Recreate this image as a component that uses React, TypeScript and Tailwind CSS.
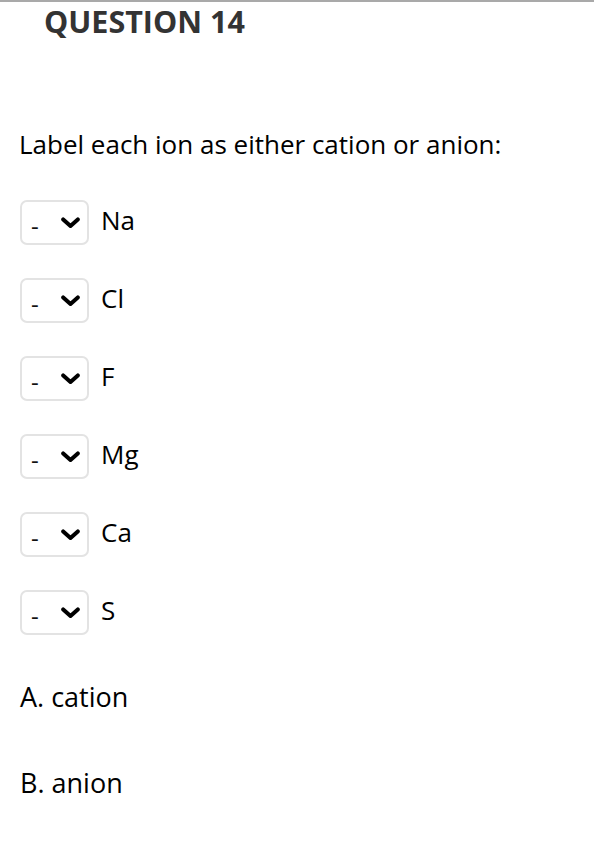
import React from 'react';

const ions = ['Na', 'Cl', 'F', 'Mg', 'Ca', 'S'];

const Chevron = () => (
  <svg width="19" height="12" viewBox="0 0 19 12" className="shrink-0">
    <path d="M2.2 2.4 L9.5 9 L16.8 2.4" fill="none" stroke="#000" strokeWidth="4" strokeLinecap="round" strokeLinejoin="round" />
  </svg>
);

const IonSelect = ({ label }: { label: string }) => (
  <div className="flex items-center gap-3">
    <div className="w-[69px] h-[45px] border-2 border-[#e3e3e3] rounded-[7px] flex items-center pl-[9px] pr-[7px] justify-between">
      <span className="text-[24px] leading-none text-[#111] mt-[6px]">-</span>
      <Chevron />
    </div>
    <span className="text-[26px] leading-none text-black -mt-[5px]">{label}</span>
  </div>
);

export default function App() {
  return (
    <div className="w-[594px] h-[852px] bg-white border-t-2 border-[#a9a9a9]" style={{ fontFamily: '"Open Sans", "Liberation Sans", sans-serif' }}>
      <h1 className="pl-[44px] pt-0 text-[30.5px] font-bold leading-[38px] text-[#333]">QUESTION 14</h1>

      <p className="pl-[19px] mt-[87px] text-[26px] leading-[34px] text-black">Label each ion as either cation or anion:</p>

      <div className="pl-[20px] mt-[39px] flex flex-col gap-[33px]">
        {ions.map((ion) => (
          <IonSelect key={ion} label={ion} />
        ))}
      </div>

      <div className="pl-[20px] mt-[45px] flex flex-col gap-[52px] text-[27px] leading-[34px] text-black">
        <div>A. cation</div>
        <div>B. anion</div>
      </div>
    </div>
  );
}
